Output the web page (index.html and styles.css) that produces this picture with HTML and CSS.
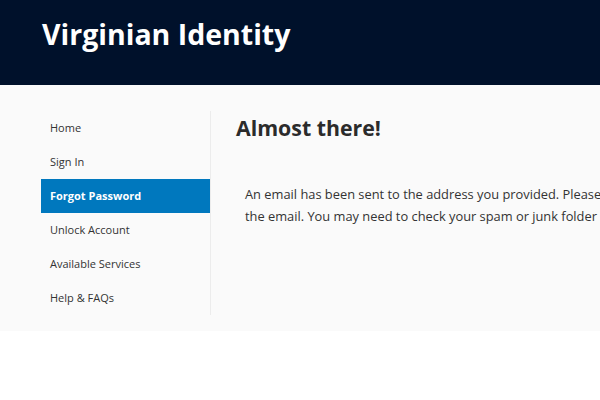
FILE: index.html
```html
<!DOCTYPE html>
<html lang="en">
<head>
<meta charset="utf-8">
<title>Virginian Identity</title>
<link rel="stylesheet" href="styles.css">
</head>
<body>
<header class="site-header">
  <h1 class="site-title">Virginian Identity</h1>
</header>
<div class="page">
  <nav class="sidebar">
    <a class="nav-item" href="#">Home</a>
    <a class="nav-item" href="#">Sign In</a>
    <a class="nav-item active" href="#">Forgot Password</a>
    <a class="nav-item" href="#">Unlock Account</a>
    <a class="nav-item" href="#">Available Services</a>
    <a class="nav-item" href="#">Help &amp; FAQs</a>
  </nav>
  <main class="content">
    <h2 class="heading">Almost there!</h2>
    <p class="message">An email has been sent to the address you provided. Please follow the link in<br>the email. You may need to check your spam or junk folder if it does not arrive.</p>
  </main>
</div>
</body>
</html>
```
FILE: styles.css
```css
html, body {
  margin: 0;
  padding: 0;
  background: #ffffff;
  overflow: hidden;
}
body {
  font-family: "Open Sans", "Noto Sans", sans-serif;
  color: #333333;
}
.site-header {
  background: #00112b;
  height: 85px;
  padding: 0 42px;
  box-sizing: border-box;
  display: flex;
  align-items: flex-start;
}
.site-title {
  margin: 15px 0 0;
  color: #ffffff;
  font-size: 28.5px;
  font-weight: 700;
  letter-spacing: 0;
}
.page {
  background: #fafafa;
  display: flex;
  padding: 26px 0 16px 41px;
  width: 900px;
}
.sidebar {
  width: 169px;
  flex: none;
  display: flex;
  flex-direction: column;
  border-right: 1px solid #ececec;
}
.nav-item {
  display: flex;
  align-items: center;
  height: 34px;
  padding: 0 0 1px 9px;
  box-sizing: border-box;
  font-size: 11px;
  color: #333333;
  text-decoration: none;
}
.nav-item.active {
  background: #0078be;
  color: #ffffff;
  font-weight: 700;
}
.content {
  padding-left: 25px;
  flex: 1;
}
.heading {
  margin: 2px 0 0;
  font-size: 21.3px;
  font-weight: 700;
  color: #2b2b2b;
}
.message {
  margin: 41px 0 0 9px;
  font-size: 12.85px;
  line-height: 22px;
  color: #333333;
  white-space: nowrap;
}
```
